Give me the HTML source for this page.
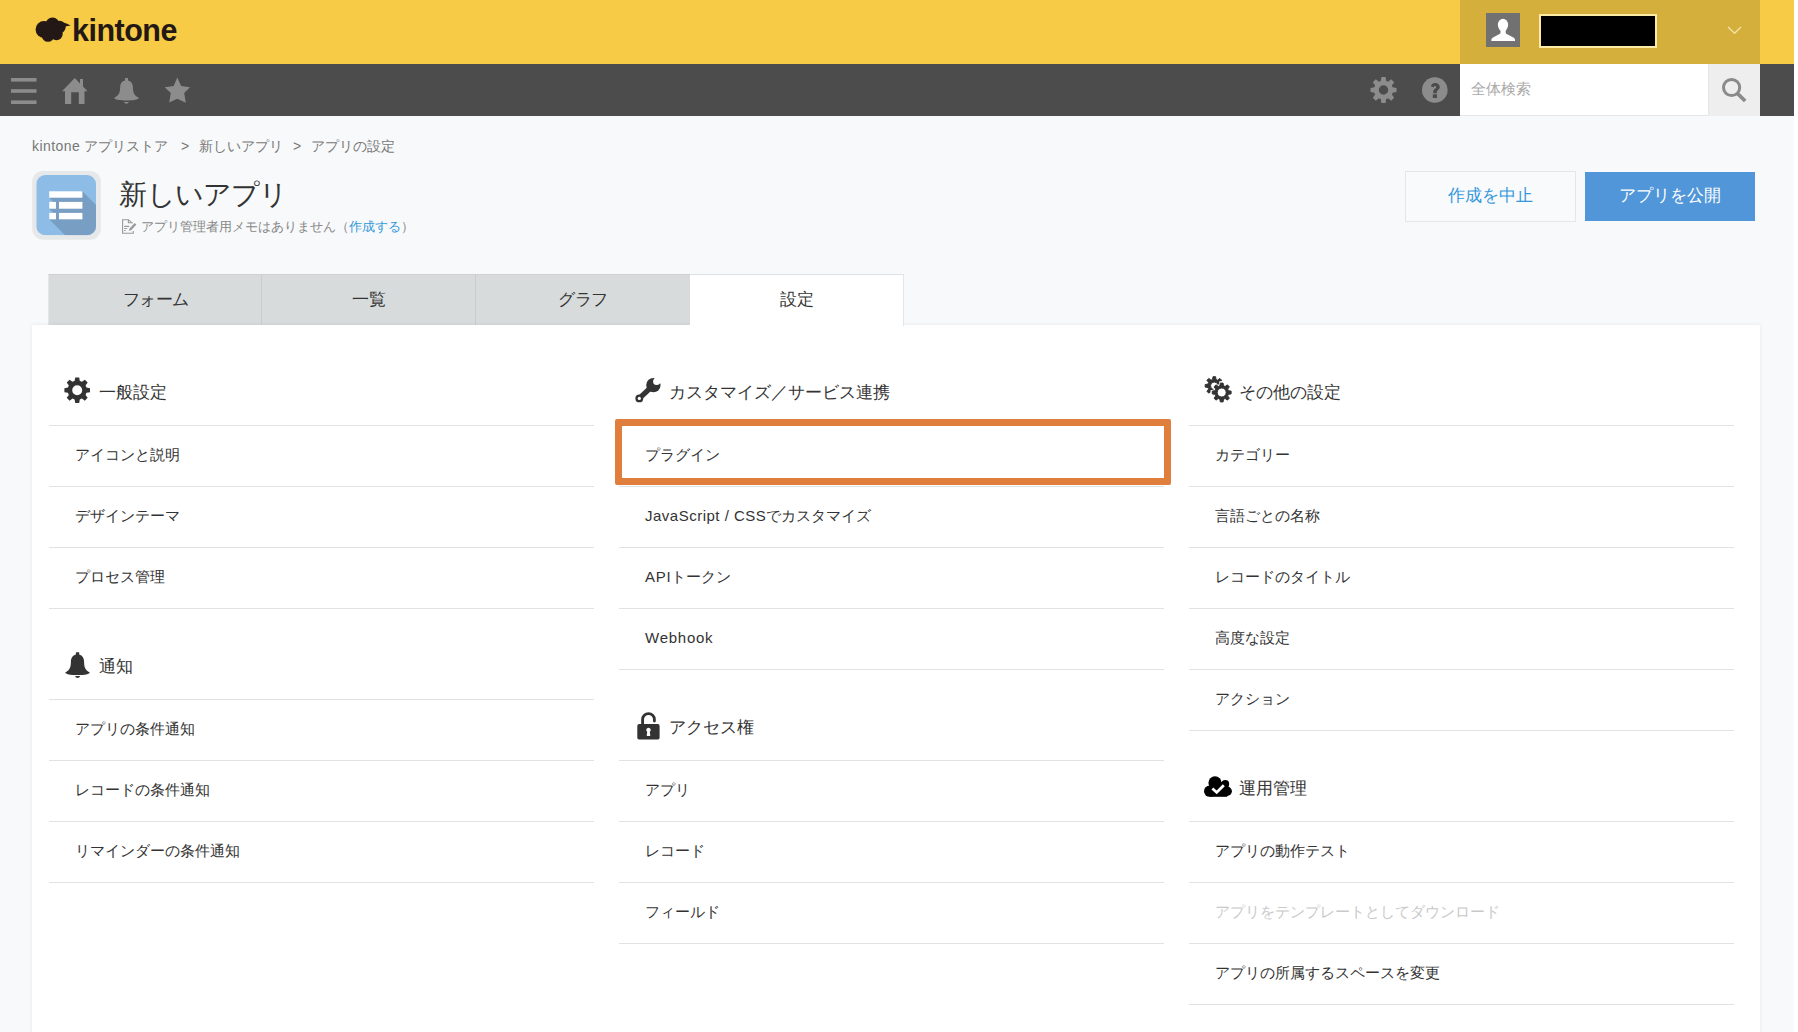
<!DOCTYPE html>
<html lang="ja">
<head>
<meta charset="utf-8">
<style>
*{box-sizing:border-box;margin:0;padding:0}
html,body{width:1798px;height:1032px;overflow:hidden;background:#fff}
body{font-family:"Liberation Sans",sans-serif;color:#333;position:relative}
.abs{position:absolute}
.j{display:inline-block;width:1em;text-align:center;font-style:normal}
.ov{position:absolute;left:0;top:0;pointer-events:none}
#bg{left:0;top:116px;width:1794px;height:916px;background:#f7f9fa}
#hdr{left:0;top:0;width:1794px;height:64px;background:#f7cb45}
#user{left:1460px;top:0;width:300px;height:64px;background:#d4af3c}
#nav{left:0;top:64px;width:1794px;height:52px;background:#4c4c4c}
#search{left:1460px;top:64px;width:248px;height:52px;background:#fff;border-bottom:1px solid #e3e7e8}
#sbtn{left:1708px;top:64px;width:52px;height:52px;background:#eeeeee;border-left:1px solid #e3e7e8}
.ph{left:1471px;top:80px;font-size:15px;color:#aaa;line-height:18px}
.txt{white-space:nowrap}
#logo{left:72px;top:13px;font-size:30.5px;font-weight:bold;color:#231815;line-height:34px;letter-spacing:-0.5px}
.crumb{top:138px;font-size:14px;color:#777;line-height:16px}
#title{left:119px;top:179px;font-size:28px;color:#333;line-height:32px}
#memo{left:141px;top:219px;font-size:13px;color:#888;line-height:15px}
#memo a{color:#3498db;text-decoration:none}
.btn{white-space:nowrap;height:51px;font-size:17px;line-height:47px;text-align:center}
#cancel{left:1405px;top:171px;width:171px;background:#f9fafb;border:1px solid #e3e7e8;color:#3498db}
#publish{left:1585px;top:172px;width:170px;height:49px;line-height:48px;background:#5096d8;color:#fff}
.tab{white-space:nowrap;top:274px;width:214px;height:51px;background:#d8dbdc;border-top:1px solid #cdd1d2;border-left:1px solid #c9cdce;font-size:16.5px;line-height:48px;text-align:center;color:#333}
.tab.on{background:#fff;border-top:1px solid #dfe2e3;border-left:none;border-right:1px solid #e3e7e8}
#panel{left:32px;top:325px;width:1728px;height:720px;background:#fff;box-shadow:0 0 4px rgba(0,0,0,.08)}
.col{top:335px;width:545px}
.sec{height:91px;border-bottom:1px solid #dfe3e5;position:relative}
.sec .ic{position:absolute;left:14px;top:41px}
.sec .t{position:absolute;left:50px;top:48px;font-size:17px;line-height:20px;color:#333;white-space:nowrap}
.it{height:61px;border-bottom:1px solid #dfe3e5;position:relative}
.it span{position:absolute;left:26px;top:20px;font-size:15px;line-height:18px;color:#333;white-space:nowrap}
.lt{font-style:normal;letter-spacing:0.75px}
.it.dis span{color:#c9c9c9}
#hl{left:615px;top:419px;width:556px;height:66px;border:7px solid #e07e3d;border-radius:2px}
</style>
</head>
<body>
<div id="bg" class="abs"></div>
<div id="hdr" class="abs"></div>
<div id="user" class="abs"></div>
<div id="nav" class="abs"></div>
<div id="search" class="abs"></div>
<div id="sbtn" class="abs"></div>
<div id="logo" class="abs txt">kintone</div>
<div class="abs txt ph"><i class="j">全</i><i class="j">体</i><i class="j">検</i><i class="j">索</i></div>

<div class="abs txt crumb" style="left:32px"><i class="lt" style="letter-spacing:0.45px">kintone</i> <i class="j">ア</i><i class="j">プ</i><i class="j">リ</i><i class="j">ス</i><i class="j">ト</i><i class="j">ア</i></div>
<div class="abs txt crumb" style="left:181px">&gt;</div>
<div class="abs txt crumb" style="left:199px"><i class="j">新</i><i class="j">し</i><i class="j">い</i><i class="j">ア</i><i class="j">プ</i><i class="j">リ</i></div>
<div class="abs txt crumb" style="left:293px">&gt;</div>
<div class="abs txt crumb" style="left:311px"><i class="j">ア</i><i class="j">プ</i><i class="j">リ</i><i class="j">の</i><i class="j">設</i><i class="j">定</i></div>
<div id="title" class="abs txt"><i class="j">新</i><i class="j">し</i><i class="j">い</i><i class="j">ア</i><i class="j">プ</i><i class="j">リ</i></div>
<div id="memo" class="abs txt"><i class="j">ア</i><i class="j">プ</i><i class="j">リ</i><i class="j">管</i><i class="j">理</i><i class="j">者</i><i class="j">用</i><i class="j">メ</i><i class="j">モ</i><i class="j">は</i><i class="j">あ</i><i class="j">り</i><i class="j">ま</i><i class="j">せ</i><i class="j">ん</i><i class="j">（</i><a><i class="j">作</i><i class="j">成</i><i class="j">す</i><i class="j">る</i></a><i class="j">）</i></div>
<div id="cancel" class="abs btn"><i class="j">作</i><i class="j">成</i><i class="j">を</i><i class="j">中</i><i class="j">止</i></div>
<div id="publish" class="abs btn"><i class="j">ア</i><i class="j">プ</i><i class="j">リ</i><i class="j">を</i><i class="j">公</i><i class="j">開</i></div>

<div class="abs tab" style="left:48px;border-left-color:#e3e7e8"><i class="j">フ</i><i class="j">ォ</i><i class="j">ー</i><i class="j">ム</i></div>
<div class="abs tab" style="left:261px"><i class="j">一</i><i class="j">覧</i></div>
<div class="abs tab" style="left:475px;width:215px"><i class="j">グ</i><i class="j">ラ</i><i class="j">フ</i></div>
<div id="panel" class="abs"></div>
<div class="abs tab on" style="left:690px;height:52px"><i class="j">設</i><i class="j">定</i></div>

<div class="abs col" style="left:49px">
  <div class="sec"><span class="t"><i class="j">一</i><i class="j">般</i><i class="j">設</i><i class="j">定</i></span></div>
  <div class="it"><span><i class="j">ア</i><i class="j">イ</i><i class="j">コ</i><i class="j">ン</i><i class="j">と</i><i class="j">説</i><i class="j">明</i></span></div>
  <div class="it"><span><i class="j">デ</i><i class="j">ザ</i><i class="j">イ</i><i class="j">ン</i><i class="j">テ</i><i class="j">ー</i><i class="j">マ</i></span></div>
  <div class="it"><span><i class="j">プ</i><i class="j">ロ</i><i class="j">セ</i><i class="j">ス</i><i class="j">管</i><i class="j">理</i></span></div>
  <div class="sec"><span class="t"><i class="j">通</i><i class="j">知</i></span></div>
  <div class="it"><span><i class="j">ア</i><i class="j">プ</i><i class="j">リ</i><i class="j">の</i><i class="j">条</i><i class="j">件</i><i class="j">通</i><i class="j">知</i></span></div>
  <div class="it"><span><i class="j">レ</i><i class="j">コ</i><i class="j">ー</i><i class="j">ド</i><i class="j">の</i><i class="j">条</i><i class="j">件</i><i class="j">通</i><i class="j">知</i></span></div>
  <div class="it"><span><i class="j">リ</i><i class="j">マ</i><i class="j">イ</i><i class="j">ン</i><i class="j">ダ</i><i class="j">ー</i><i class="j">の</i><i class="j">条</i><i class="j">件</i><i class="j">通</i><i class="j">知</i></span></div>
</div>
<div class="abs col" style="left:619px">
  <div class="sec"><span class="t"><i class="j">カ</i><i class="j">ス</i><i class="j">タ</i><i class="j">マ</i><i class="j">イ</i><i class="j">ズ</i><i class="j">／</i><i class="j">サ</i><i class="j">ー</i><i class="j">ビ</i><i class="j">ス</i><i class="j">連</i><i class="j">携</i></span></div>
  <div class="it"><span><i class="j">プ</i><i class="j">ラ</i><i class="j">グ</i><i class="j">イ</i><i class="j">ン</i></span></div>
  <div class="it"><span><i class="lt" style="letter-spacing:0.5px">JavaScript / CSS</i><i class="j">で</i><i class="j">カ</i><i class="j">ス</i><i class="j">タ</i><i class="j">マ</i><i class="j">イ</i><i class="j">ズ</i></span></div>
  <div class="it"><span><i class="lt">API</i><i class="j">ト</i><i class="j">ー</i><i class="j">ク</i><i class="j">ン</i></span></div>
  <div class="it"><span class="lt">Webhook</span></div>
  <div class="sec"><span class="t"><i class="j">ア</i><i class="j">ク</i><i class="j">セ</i><i class="j">ス</i><i class="j">権</i></span></div>
  <div class="it"><span><i class="j">ア</i><i class="j">プ</i><i class="j">リ</i></span></div>
  <div class="it"><span><i class="j">レ</i><i class="j">コ</i><i class="j">ー</i><i class="j">ド</i></span></div>
  <div class="it"><span><i class="j">フ</i><i class="j">ィ</i><i class="j">ー</i><i class="j">ル</i><i class="j">ド</i></span></div>
</div>
<div class="abs col" style="left:1189px">
  <div class="sec"><span class="t"><i class="j">そ</i><i class="j">の</i><i class="j">他</i><i class="j">の</i><i class="j">設</i><i class="j">定</i></span></div>
  <div class="it"><span><i class="j">カ</i><i class="j">テ</i><i class="j">ゴ</i><i class="j">リ</i><i class="j">ー</i></span></div>
  <div class="it"><span><i class="j">言</i><i class="j">語</i><i class="j">ご</i><i class="j">と</i><i class="j">の</i><i class="j">名</i><i class="j">称</i></span></div>
  <div class="it"><span><i class="j">レ</i><i class="j">コ</i><i class="j">ー</i><i class="j">ド</i><i class="j">の</i><i class="j">タ</i><i class="j">イ</i><i class="j">ト</i><i class="j">ル</i></span></div>
  <div class="it"><span><i class="j">高</i><i class="j">度</i><i class="j">な</i><i class="j">設</i><i class="j">定</i></span></div>
  <div class="it"><span><i class="j">ア</i><i class="j">ク</i><i class="j">シ</i><i class="j">ョ</i><i class="j">ン</i></span></div>
  <div class="sec"><span class="t"><i class="j">運</i><i class="j">用</i><i class="j">管</i><i class="j">理</i></span></div>
  <div class="it"><span><i class="j">ア</i><i class="j">プ</i><i class="j">リ</i><i class="j">の</i><i class="j">動</i><i class="j">作</i><i class="j">テ</i><i class="j">ス</i><i class="j">ト</i></span></div>
  <div class="it dis"><span><i class="j">ア</i><i class="j">プ</i><i class="j">リ</i><i class="j">を</i><i class="j">テ</i><i class="j">ン</i><i class="j">プ</i><i class="j">レ</i><i class="j">ー</i><i class="j">ト</i><i class="j">と</i><i class="j">し</i><i class="j">て</i><i class="j">ダ</i><i class="j">ウ</i><i class="j">ン</i><i class="j">ロ</i><i class="j">ー</i><i class="j">ド</i></span></div>
  <div class="it"><span><i class="j">ア</i><i class="j">プ</i><i class="j">リ</i><i class="j">の</i><i class="j">所</i><i class="j">属</i><i class="j">す</i><i class="j">る</i><i class="j">ス</i><i class="j">ペ</i><i class="j">ー</i><i class="j">ス</i><i class="j">を</i><i class="j">変</i><i class="j">更</i></span></div>
</div>
<div id="hl" class="abs"></div>
<svg class="ov" width="1798" height="1032" viewBox="0 0 1798 1032">
<!-- logo cloud -->
<g fill="#231815">
<circle cx="44" cy="29.5" r="8.4"/>
<circle cx="52.5" cy="24.8" r="7.2"/>
<circle cx="59.5" cy="27" r="6.2"/>
<circle cx="48" cy="35.5" r="6.3"/>
<circle cx="56.5" cy="34" r="6.2"/>
<circle cx="53" cy="30" r="7"/>
<path d="M61,22.5 Q66,22.6 70.7,25.4 Q66,25.6 62.5,28 Z"/>
</g>
<!-- nav icons -->
<g fill="#8c8c8c">
<rect x="11" y="78" width="25.5" height="3.6"/>
<rect x="11" y="89.2" width="25.5" height="3.6"/>
<rect x="11" y="100.4" width="25.5" height="3.6"/>
<path d="M62,91.2 L74.75,78 L80,83.4 L80,79 L83,79 L83,86.5 L87.6,91.2 L84.5,91.2 L84.5,104 L78.8,104 L78.8,92.2 L71.2,92.2 L71.2,104 L65,104 L65,91.2 Z"/>
<path d="M125,78 h3 v2.4 C131.2,81 132.8,83.5 132.8,86.5 C133,92 133.5,95 138.8,97.8 C138.8,99.6 133,100.6 126.5,100.6 C120,100.6 114.2,99.6 114.2,97.8 C119.5,95 120,92 120.2,86.5 C120.2,83.5 121.8,81 125,80.4 Z"/>
<path d="M123.8,102 h5.2 q-1,1.8 -2.6,1.8 q-1.6,0 -2.6,-1.8Z"/>
<path d="M177.25,77.5 L181.2,86 L190,87.2 L184.2,93 L185.8,102.7 L177.25,98.7 L169.2,102.6 L170.8,93 L164.7,87.2 L173.7,86 Z"/>
<path d="M1380.80,80.89L1381.40,77.00L1385.60,77.00L1386.20,80.89A9.50,9.50 0 0 1 1388.03,81.65L1391.21,79.32L1394.18,82.29L1391.85,85.47A9.50,9.50 0 0 1 1392.61,87.30L1396.50,87.90L1396.50,92.10L1392.61,92.70A9.50,9.50 0 0 1 1391.85,94.53L1394.18,97.71L1391.21,100.68L1388.03,98.35A9.50,9.50 0 0 1 1386.20,99.11L1385.60,103.00L1381.40,103.00L1380.80,99.11A9.50,9.50 0 0 1 1378.97,98.35L1375.79,100.68L1372.82,97.71L1375.15,94.53A9.50,9.50 0 0 1 1374.39,92.70L1370.50,92.10L1370.50,87.90L1374.39,87.30A9.50,9.50 0 0 1 1375.15,85.47L1372.82,82.29L1375.79,79.32L1378.97,81.65A9.50,9.50 0 0 1 1380.80,80.89ZM1378.75,90.00a4.75,4.75 0 1 0 9.50,0a4.75,4.75 0 1 0 -9.50,0Z" fill-rule="evenodd"/>
<circle cx="1434.8" cy="90" r="12.8"/>
</g>
<path d="M1431,86.6 C1431,84.3 1432.8,83 1435,83 C1437.6,83 1439.8,84.6 1439.8,87.1 C1439.8,89.6 1437.2,90.2 1436.8,92 L1436.8,93.3 L1433.2,93.3 L1433.2,91.6 C1433.4,89 1436.2,88.7 1436.2,87.1 C1436.2,86.4 1435.7,86 1435,86 C1434.2,86 1433.9,86.6 1433.9,87.3 Z" fill="#4b4b4b"/>
<rect x="1432.8" y="94.3" width="4.2" height="3.7" fill="#4b4b4b"/>
<!-- search icon -->
<circle cx="1731.6" cy="87.5" r="8.1" fill="none" stroke="#8a8a8a" stroke-width="3"/>
<path d="M1737.5,93.5 L1745.2,101" stroke="#8a8a8a" stroke-width="3.8" stroke-linecap="butt"/>
<!-- avatar -->
<rect x="1486" y="13" width="34" height="34" fill="#717171"/>
<g fill="#fff">
<ellipse cx="1503" cy="25" rx="5.1" ry="6.3"/>
<path d="M1500.6,29 L1505.6,29 L1505.8,33.4 L1513.8,37.8 C1515,38.6 1515.2,40 1515,41 L1491.4,41 C1491.2,40 1491.4,38.6 1492.6,37.8 L1500.4,33.4 Z"/>
</g>
<!-- name box -->
<rect x="1540" y="15" width="116" height="32" fill="#000" stroke="#fdeaa5" stroke-width="2"/>
<path d="M1728,27 L1734.5,33.3 L1741,27" fill="none" stroke="#f3e2a4" stroke-width="1.4"/>
<!-- app icon -->
<defs><clipPath id="ai"><rect x="36.3" y="175" width="59.7" height="60.2" rx="9"/></clipPath></defs>
<rect x="32.2" y="170.9" width="68.7" height="68.8" rx="11" fill="#e6e8e9"/>
<g clip-path="url(#ai)">
<rect x="36.3" y="175" width="59.7" height="60.2" fill="#8dbde6"/>
<path d="M49.2,197.7 L53.4,201.9 L49.2,201.9 L49.2,208.7 L53.4,212.9 L49.2,212.9 L49.2,219.3 L65.1,235.2 L100,235.2 L100,208.9 L82.4,191.3 Z" fill="#789fc3"/>
</g>
<g fill="#fff">
<rect x="49.2" y="191.3" width="33.2" height="6.4"/>
<rect x="49.2" y="201.9" width="6.8" height="6.8"/>
<rect x="59" y="201.9" width="23.4" height="6.8"/>
<rect x="49.2" y="212.9" width="6.8" height="6.4"/>
<rect x="59" y="212.9" width="23.4" height="6.4"/>
</g>
<!-- memo icon -->
<g fill="none" stroke="#999" stroke-width="1.1">
<path d="M133.3,231 V233.2 H122.6 V219.7 H128.4 L132.4,223.2"/>
<path d="M128.4,219.7 V222.8 H132.4"/>
<path d="M124.2,226.4 H129.2 M124.2,228.5 H127.2 M124.2,230.5 H125.8"/>
</g>
<path d="M128.8,230.8 L129.6,228.6 L134.6,223 L136.4,224.6 L131.2,230.2 Z" fill="#999"/>
<!-- section icons -->
<g fill="#333">
<path d="M74.60,380.96L75.20,377.40L79.20,377.40L79.80,380.96A9.60,9.60 0 0 1 81.90,381.83L84.84,379.73L87.67,382.56L85.57,385.50A9.60,9.60 0 0 1 86.44,387.60L90.00,388.20L90.00,392.20L86.44,392.80A9.60,9.60 0 0 1 85.57,394.90L87.67,397.84L84.84,400.67L81.90,398.57A9.60,9.60 0 0 1 79.80,399.44L79.20,403.00L75.20,403.00L74.60,399.44A9.60,9.60 0 0 1 72.50,398.57L69.56,400.67L66.73,397.84L68.83,394.90A9.60,9.60 0 0 1 67.96,392.80L64.40,392.20L64.40,388.20L67.96,387.60A9.60,9.60 0 0 1 68.83,385.50L66.73,382.56L69.56,379.73L72.50,381.83A9.60,9.60 0 0 1 74.60,380.96ZM72.20,390.20a5.00,5.00 0 1 0 10.00,0a5.00,5.00 0 1 0 -10.00,0Z" fill-rule="evenodd"/>
<!-- wrench -->
<!-- bell -->
<path d="M75.9,652.2 h3.3 v2.4 C82.5,655.4 84.1,658.4 84.1,662 C84.2,667 84.8,669.8 89.8,672.4 C89.8,674 84.5,675 77.5,675 C70.5,675 65.2,674 65.2,672.4 C70.2,669.8 70.8,667 70.9,662 C70.9,658.4 72.5,655.4 75.9,654.6 Z"/>
<path d="M75,676 h5.2 q-0.8,2 -2.6,2 q-1.8,0 -2.6,-2 Z"/>
<!-- lock -->
<rect x="637.3" y="724.1" width="22.3" height="15.4" rx="1.8"/>
<path d="M642.6,724.5 V719.5 A5.9,5.9 0 0 1 654.4,719.5 V721" fill="none" stroke="#333" stroke-width="2.8" stroke-linecap="round"/>
<!-- gears -->
<path d="M1212.60,379.53L1213.00,376.70L1215.60,376.70L1216.00,379.53A6.50,6.50 0 0 1 1217.53,380.16L1219.82,378.45L1221.65,380.28L1219.94,382.57A6.50,6.50 0 0 1 1220.57,384.10L1223.40,384.50L1223.40,387.10L1220.57,387.50A6.50,6.50 0 0 1 1219.94,389.03L1221.65,391.32L1219.82,393.15L1217.53,391.44A6.50,6.50 0 0 1 1216.00,392.07L1215.60,394.90L1213.00,394.90L1212.60,392.07A6.50,6.50 0 0 1 1211.07,391.44L1208.78,393.15L1206.95,391.32L1208.66,389.03A6.50,6.50 0 0 1 1208.03,387.50L1205.20,387.10L1205.20,384.50L1208.03,384.10A6.50,6.50 0 0 1 1208.66,382.57L1206.95,380.28L1208.78,378.45L1211.07,380.16A6.50,6.50 0 0 1 1212.60,379.53ZM1210.50,385.80a3.80,3.80 0 1 0 7.60,0a3.80,3.80 0 1 0 -7.60,0Z" fill-rule="evenodd" stroke="#333" stroke-width="1" stroke-linejoin="round"/>
<path d="M1219.00,384.23L1219.40,381.30L1224.00,381.30L1224.40,384.23A8.70,8.70 0 0 1 1225.64,384.74L1227.99,382.95L1231.25,386.21L1229.46,388.56A8.70,8.70 0 0 1 1229.97,389.80L1232.90,390.20L1232.90,394.80L1229.97,395.20A8.70,8.70 0 0 1 1229.46,396.44L1231.25,398.79L1227.99,402.05L1225.64,400.26A8.70,8.70 0 0 1 1224.40,400.77L1224.00,403.70L1219.40,403.70L1219.00,400.77A8.70,8.70 0 0 1 1217.76,400.26L1215.41,402.05L1212.15,398.79L1213.94,396.44A8.70,8.70 0 0 1 1213.43,395.20L1210.50,394.80L1210.50,390.20L1213.43,389.80A8.70,8.70 0 0 1 1213.94,388.56L1212.15,386.21L1215.41,382.95L1217.76,384.74A8.70,8.70 0 0 1 1219.00,384.23Z" fill="#fff"/>
<path d="M1219.90,385.84L1220.30,383.10L1223.10,383.10L1223.50,385.84A6.90,6.90 0 0 1 1225.14,386.52L1227.36,384.86L1229.34,386.84L1227.68,389.06A6.90,6.90 0 0 1 1228.36,390.70L1231.10,391.10L1231.10,393.90L1228.36,394.30A6.90,6.90 0 0 1 1227.68,395.94L1229.34,398.16L1227.36,400.14L1225.14,398.48A6.90,6.90 0 0 1 1223.50,399.16L1223.10,401.90L1220.30,401.90L1219.90,399.16A6.90,6.90 0 0 1 1218.26,398.48L1216.04,400.14L1214.06,398.16L1215.72,395.94A6.90,6.90 0 0 1 1215.04,394.30L1212.30,393.90L1212.30,391.10L1215.04,390.70A6.90,6.90 0 0 1 1215.72,389.06L1214.06,386.84L1216.04,384.86L1218.26,386.52A6.90,6.90 0 0 1 1219.90,385.84ZM1217.20,392.50a4.50,4.50 0 1 0 9.00,0a4.50,4.50 0 1 0 -9.00,0Z" fill-rule="evenodd" stroke="#333" stroke-width="1" stroke-linejoin="round"/>
</g>
<path d="M648.5,727.7 a2.2,2.2 0 0 1 1.3,4 l0.5,4.3 h-3.6 l0.5,-4.3 a2.2,2.2 0 0 1 1.3,-4 Z" fill="#fff"/>
<mask id="wr" maskUnits="userSpaceOnUse" x="625" y="365" width="50" height="50">
<circle cx="653.4" cy="385.1" r="7.2" fill="#fff"/>
<line x1="653" y1="385.5" x2="639.3" y2="398.4" stroke="#fff" stroke-width="5.2"/>
<circle cx="639.3" cy="398.4" r="3.9" fill="#fff"/>
<circle cx="656.6" cy="381.4" r="3.5" fill="#000"/>
<polygon points="654.1,378.9 661.2,371.8 666.2,376.8 659.1,383.9" fill="#000"/>
<circle cx="639.3" cy="398.4" r="1.6" fill="#000"/>
</mask>
<rect x="625" y="365" width="50" height="50" fill="#333" mask="url(#wr)"/>
<!-- cloud check -->
<g fill="#000">
<circle cx="1215" cy="782.8" r="6.6"/>
<circle cx="1225.3" cy="784" r="3.9"/>
<circle cx="1209.6" cy="791.2" r="5.6"/>
<circle cx="1227.2" cy="791.2" r="4.7"/>
<rect x="1209.6" y="786" width="17.6" height="10.8"/>
<rect x="1213" y="782" width="14" height="10"/>
</g>
<path d="M1212.4,788.4 L1216.7,792.4 L1223.8,785.2" fill="none" stroke="#fff" stroke-width="2.8"/>
</svg>
</body>
</html>
